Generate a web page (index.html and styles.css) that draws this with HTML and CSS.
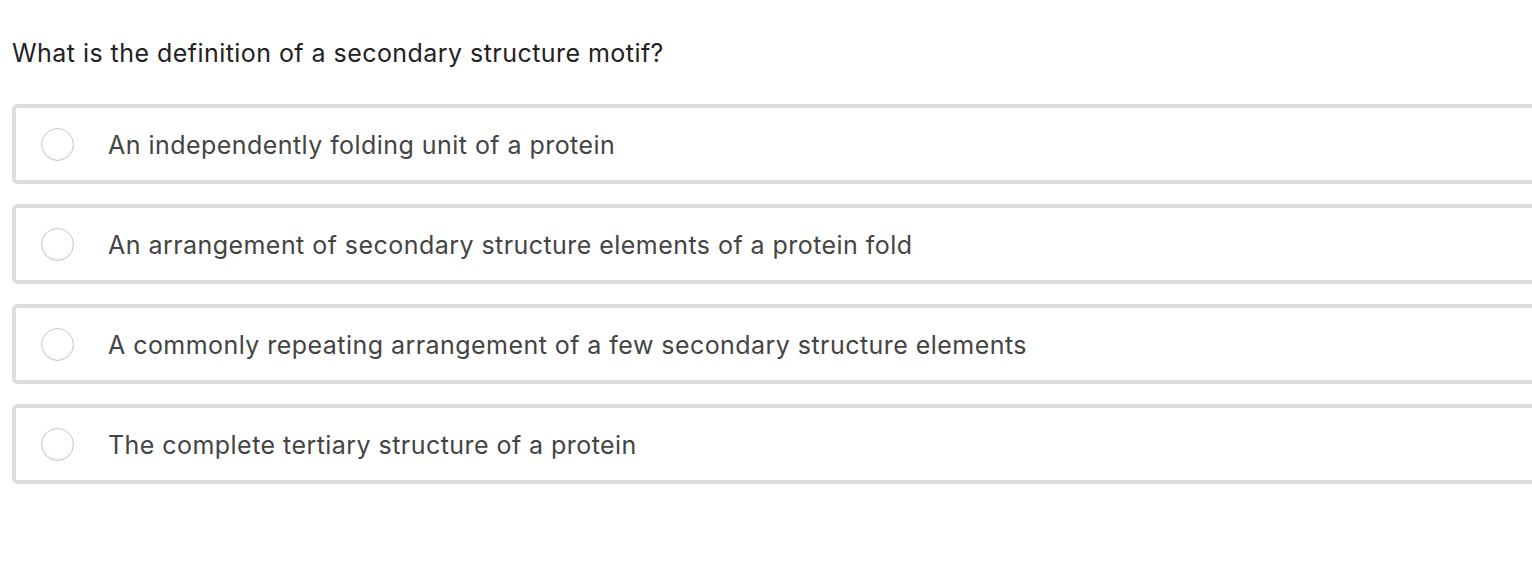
FILE: index.html
```html
<!DOCTYPE html>
<html>
<head>
<meta charset="utf-8">
<link rel="stylesheet" href="styles.css">
</head>
<body>
<div class="quiz">
  <div class="question">What is the definition of a secondary structure motif?</div>
  <div class="options">
    <label class="option"><span class="radio"></span><span class="text">An independently folding unit of a protein</span></label>
    <label class="option"><span class="radio"></span><span class="text">An arrangement of secondary structure elements of a protein fold</span></label>
    <label class="option"><span class="radio"></span><span class="text">A commonly repeating arrangement of a few secondary structure elements</span></label>
    <label class="option"><span class="radio"></span><span class="text">The complete tertiary structure of a protein</span></label>
  </div>
</div>
</body>
</html>
```

FILE: styles.css
```css
html, body {
  margin: 0;
  padding: 0;
  background: #fff;
  overflow: hidden;
}
body {
  font-family: Inter, "Noto Sans", sans-serif;
  width: 1532px;
  height: 574px;
}
.quiz {
  padding: 37px 0 0 12px;
  width: 1540px;
}
.question {
  font-size: 25px;
  letter-spacing: 0.45px;
  line-height: 32px;
  color: #222;
  margin-bottom: 35px;
}
.options {
  display: flex;
  flex-direction: column;
  gap: 20px;
}
.option {
  display: flex;
  align-items: center;
  height: 80px;
  box-sizing: border-box;
  border: 4px solid #dedede;
  border-radius: 5px;
  padding-left: 25px;
}
.radio {
  width: 33px;
  height: 33px;
  box-sizing: border-box;
  border-radius: 50%;
  border: 1px solid #c6c6c6;
  background: #fff;
  box-shadow: inset 0 -2px 3px rgba(0,0,0,0.05);
  flex: none;
}
.text {
  margin-left: 34px;
  padding-top: 2px;
  font-size: 25px;
  letter-spacing: 0.45px;
  color: #444;
}
```
